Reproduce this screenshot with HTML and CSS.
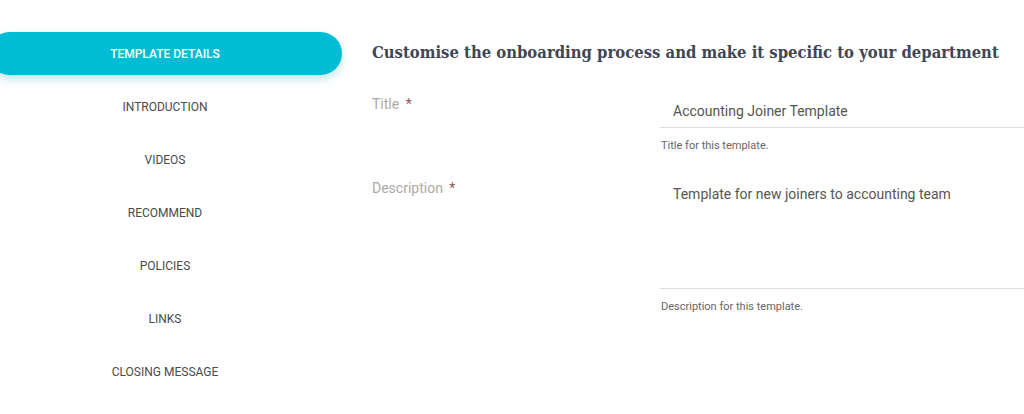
FILE: index.html
```html
<!DOCTYPE html>
<html>
<head>
<meta charset="utf-8">
<link rel="stylesheet" href="styles.css">
</head>
<body>
<div class="page">
  <nav class="sidebar">
    <a class="nav-item active">TEMPLATE DETAILS</a>
    <a class="nav-item">INTRODUCTION</a>
    <a class="nav-item">VIDEOS</a>
    <a class="nav-item">RECOMMEND</a>
    <a class="nav-item">POLICIES</a>
    <a class="nav-item">LINKS</a>
    <a class="nav-item">CLOSING MESSAGE</a>
  </nav>
  <main class="content">
    <h1 class="heading">Customise the onboarding process and make it specific to your department</h1>
    <div class="form-row">
      <label class="label">Title <span class="req">*</span></label>
      <div class="field">
        <input class="input" type="text" value="Accounting Joiner Template">
        <div class="help">Title for this template.</div>
      </div>
    </div>
    <div class="form-row">
      <label class="label">Description <span class="req">*</span></label>
      <div class="field">
        <textarea class="textarea">Template for new joiners to accounting team</textarea>
        <div class="help">Description for this template.</div>
      </div>
    </div>
  </main>
</div>
</body>
</html>
```
FILE: styles.css
```css
html, body {
  margin: 0;
  padding: 0;
  background: #fff;
}
body {
  font-family: Roboto, "Liberation Sans", sans-serif;
  overflow: hidden;
}
.page {
  display: flex;
  width: 1024px;
  height: 414px;
}
.sidebar {
  display: flex;
  flex-direction: column;
  gap: 10px;
  width: 354px;
  margin-left: -12px;
  padding-top: 32px;
  flex-shrink: 0;
}
.nav-item {
  display: flex;
  align-items: center;
  justify-content: center;
  height: 43px;
  font-size: 12px;
  font-weight: 400;
  color: #4a4a4a;
  border-radius: 22px;
}
.nav-item.active {
  background: #00bcd4;
  color: #fff;
  font-weight: 500;
  box-shadow: 0 4px 10px rgba(0, 150, 170, 0.25);
}
.content {
  flex: 1;
  padding-left: 30px;
}
.heading {
  margin: 41px 0 0 0;
  font-family: "DejaVu Serif Condensed", "DejaVu Serif", serif;
  font-stretch: condensed;
  font-weight: bold;
  font-size: 16.5px;
  line-height: 24px;
  color: #3f4654;
  white-space: nowrap;
}
.form-row {
  display: grid;
  grid-template-columns: 288px 1fr;
}
.form-row:first-of-type {
  margin-top: 30px;
}
.form-row + .form-row {
  margin-top: 26px;
}
.label {
  font-size: 14px;
  line-height: 20px;
  color: #aaa;
  margin-top: -1px;
}
.req {
  color: #8a5b55;
  margin-left: 3px;
}
.field {
  display: flex;
  flex-direction: column;
}
.input, .textarea {
  font-family: inherit;
  font-size: 14px;
  line-height: 20px;
  color: #555;
  border: none;
  border-bottom: 1px solid #ddd;
  padding: 6px 0 6px 13px;
  margin: 0;
  outline: none;
  background: transparent;
  width: 100%;
  box-sizing: border-box;
}
.input {
  height: 33px;
}
.textarea {
  height: 110px;
  padding-top: 5px;
  resize: none;
  overflow: hidden;
}
.help {
  margin-top: 11px;
  font-size: 11px;
  line-height: 14px;
  color: #666;
  padding-left: 1px;
}
```
